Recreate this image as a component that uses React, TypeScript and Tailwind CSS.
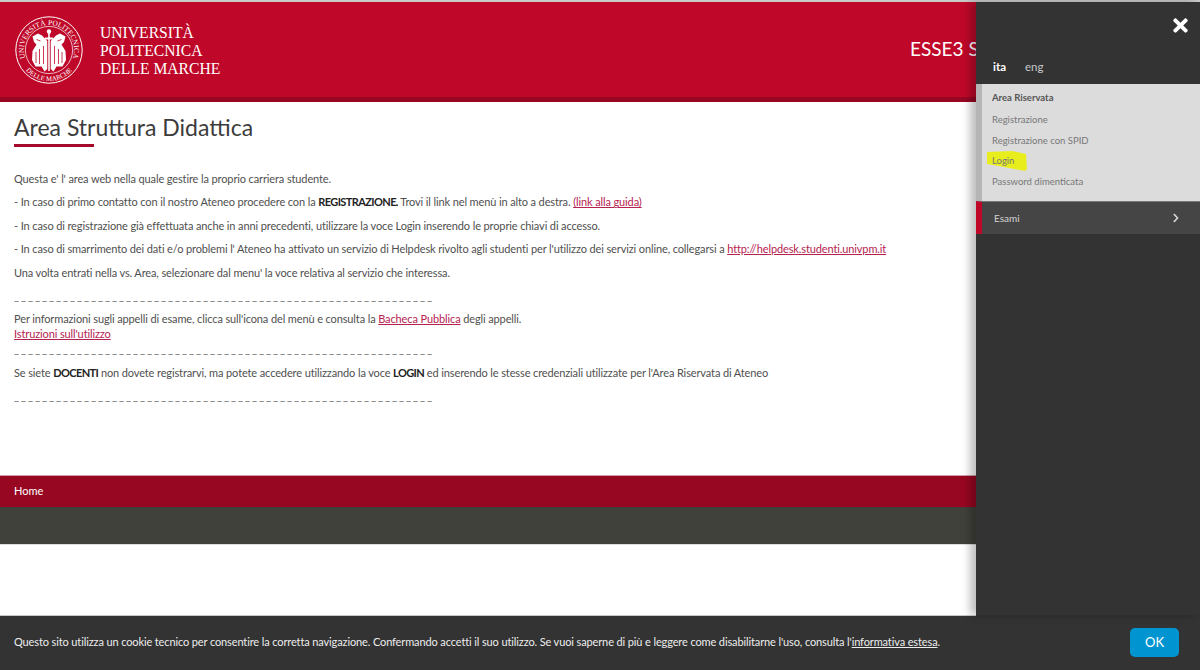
import { FaTimes, FaChevronRight } from "react-icons/fa";

function Griffin() {
  return (
    <>
      <path
        fill="#fff"
        d="M17.5 20.5 L23 17.5 L27 19.5 L32.3 25 L32.3 53 L29.5 55.5 L26.5 50.5 L20.5 50.5 L17 44 L17.5 35 L21.5 28.5 L19 26 Z"
      />
      <path stroke="#bf0829" strokeWidth="0.8" d="M21 36v11M24.5 33v15M28.5 30v18M21.5 23.5l4 1.5" />
    </>
  );
}

function Seal() {
  return (
    <svg viewBox="0 0 68 68" className="h-[68px] w-[68px] shrink-0" fill="none">
      <circle cx="34" cy="34" r="33.2" stroke="#fff" strokeWidth="1" />
      <circle cx="34" cy="34" r="23.6" stroke="#fff" strokeWidth="0.7" />
      <defs>
        <path id="sealTop" d="M13.5 48.3 A25 25 0 1 1 54.5 48.3" />
        <path id="sealBottom" d="M8.6 51.8 A31 31 0 0 0 59.4 51.8" />
      </defs>
      <text fill="#fff" fontSize="7.4" fontFamily="Liberation Serif, serif">
        <textPath href="#sealTop" startOffset="50%" textAnchor="middle">
          UNIVERSITÀ POLITECNICA
        </textPath>
      </text>
      <text fill="#fff" fontSize="6.8" fontFamily="Liberation Serif, serif">
        <textPath href="#sealBottom" startOffset="50%" textAnchor="middle">
          DELLE MARCHE
        </textPath>
      </text>
      <Griffin />
      <g transform="translate(68 0) scale(-1 1)">
        <Griffin />
      </g>
      <circle cx="34" cy="15.5" r="2.2" fill="#fff" />
      <path fill="#fff" d="M33.2 17h1.6v38h-1.6zM30 21.5h8v2h-8z" />
    </svg>
  );
}

function Dashes() {
  return (
    <div className="h-[15px] overflow-hidden text-[11px] leading-[15px] tracking-[1.95px] text-[#666]">
      {"_".repeat(60)}
    </div>
  );
}

function Link({ children }: { children: React.ReactNode }) {
  return <a href="#" className="text-[#b5224f] underline">{children}</a>;
}

function Strong({ children }: { children: React.ReactNode }) {
  return <b className="tracking-[-0.6px] text-[#222]">{children}</b>;
}

export default function App() {
  return (
    <div className="relative h-[670px] w-[1200px] overflow-hidden bg-white font-['Lato',sans-serif] text-[#4f4f4f]">
      <div className="h-[2px] bg-[#c9c9c9]" />
      <header className="flex h-[95px] items-center bg-[#bf0829] pl-[15px]">
        <Seal />
        <div className="ml-[17px] mt-[2px] origin-left scale-x-[0.92] whitespace-nowrap font-['Liberation_Serif',serif] text-[17px] leading-[18px] text-white">
          <div>UNIVERSITÀ</div>
          <div>POLITECNICA</div>
          <div>DELLE MARCHE</div>
        </div>
        <div className="ml-auto w-[290px] whitespace-nowrap text-[19px] text-white">ESSE3 Se</div>
      </header>
      <div className="h-[5px] bg-[#980722]" />

      <main className="h-[373px] px-[14px]">
        <h1 className="pt-[11px] text-[23px] leading-[28px] text-[#3c3c3c]">Area Struttura Didattica</h1>
        <div className="mt-[3px] h-[3px] w-[80px] bg-[#a50a2a]" />
        <div className="mt-[24px] whitespace-nowrap text-[11px] leading-[15px] tracking-[-0.12px]">
          <p>Questa e' l' area web nella quale gestire la proprio carriera studente.</p>
          <p className="mt-[8.4px]">
            - In caso di primo contatto con il nostro Ateneo procedere con la <Strong>REGISTRAZIONE.</Strong> Trovi il link nel menù in alto a destra. <Link>(link alla guida)</Link>
          </p>
          <p className="mt-[8.4px]">- In caso di registrazione già effettuata anche in anni precedenti, utilizzare la voce Login inserendo le proprie chiavi di accesso.</p>
          <p className="mt-[8.4px]">
            - In caso di smarrimento dei dati e/o problemi l' Ateneo ha attivato un servizio di Helpdesk rivolto agli studenti per l'utilizzo dei servizi online, collegarsi a <Link>http://helpdesk.studenti.univpm.it</Link>
          </p>
          <p className="mt-[8.4px]">Una volta entrati nella vs. Area, selezionare dal menu' la voce relativa al servizio che interessa.</p>
          <div className="mt-[8px]"><Dashes /></div>
          <p className="mt-[8.5px]">
            Per informazioni sugli appelli di esame, clicca sull'icona del menù e consulta la <Link>Bacheca Pubblica</Link> degli appelli.
          </p>
          <p><Link>Istruzioni sull'utilizzo</Link></p>
          <Dashes />
          <p className="mt-[8.5px]">
            Se siete <Strong>DOCENTI</Strong> non dovete registrarvi, ma potete accedere utilizzando la voce <Strong>LOGIN</Strong> ed inserendo le stesse credenziali utilizzate per l'Area Riservata di Ateneo
          </p>
          <div className="mt-[8.5px]"><Dashes /></div>
        </div>
      </main>

      <footer>
        <div className="flex h-[32px] items-center border-t border-[#d0a0aa] bg-[#980722] pl-[14px] text-[11px] text-white">Home</div>
        <div className="h-[37px] bg-[#41413b]" />
        <div className="h-px bg-[#dddddd]" />
      </footer>

      {/* cookie */}
      <div className="absolute bottom-0 left-0 right-0 flex h-[55px] items-center justify-between bg-[#333333] pl-[14px] pr-[21px] text-[11px] tracking-[-0.12px] text-[#ededed]">
        <p className="whitespace-nowrap">
          Questo sito utilizza un cookie tecnico per consentire la corretta navigazione. Confermando accetti il suo utilizzo. Se vuoi saperne di più e leggere come disabilitarne l'uso, consulta l'<a href="#" className="underline">informativa estesa</a>.
        </p>
        <button className="h-[29px] w-[49px] rounded-[5px] bg-[#0095d0] text-[13px] tracking-normal text-white">OK</button>
      </div>
      <div className="absolute bottom-[54px] left-0 h-px w-[976px] bg-[#c8c8c8]" />

      {/* drawer */}
      <aside className="absolute bottom-[55px] right-0 top-[2px] w-[224px] bg-[#333333] shadow-[-6px_0_8px_rgba(0,0,0,0.25)]">
        <div className="flex h-[82px] flex-col">
          <div className="flex justify-end pr-[9px] pt-[13px]">
            <FaTimes className="h-[21px] w-[21px] text-white" />
          </div>
          <div className="mt-[23px] flex items-center gap-[19px] pl-[17px] text-[11.5px] leading-[15px]">
            <span className="font-bold text-white">ita</span>
            <span className="text-[#c8c8c8]">eng</span>
          </div>
        </div>
        <div className="h-[117px] border-l-[6px] border-[#b5b5b5] bg-[#dcdcdc] pl-[10px] pt-[7px] text-[9.5px] text-[#777]">
          <div className="font-bold leading-[13px] text-[#555]">Area Riservata</div>
          <div className="mt-[9px] leading-[13px]">Registrazione</div>
          <div className="mt-[7.5px] leading-[13px]">Registrazione con SPID</div>
          <div className="relative mt-[7.5px] leading-[13px]">
            <svg viewBox="0 0 41 20" className="absolute left-[-6px] top-[-3px] h-[20px] w-[41px]">
              <path fill="#e8ee1e" d="M1 1 L26 0 L40 3 L41 18 L39 20 L18 16 L1 13 Z" />
            </svg>
            <span className="relative">Login</span>
          </div>
          <div className="mt-[7.5px] leading-[13px]">Password dimenticata</div>
        </div>
        <div className="flex h-[33px] items-center justify-between border-l-[6px] border-t border-l-[#bf0829] border-t-[#777] bg-[#454545] pl-[12px] pr-[19px] text-[10px] text-[#d5d5d5]">
          Esami
          <FaChevronRight className="h-[10px] w-[10px] text-[#d5d5d5]" />
        </div>
      </aside>
    </div>
  );
}
